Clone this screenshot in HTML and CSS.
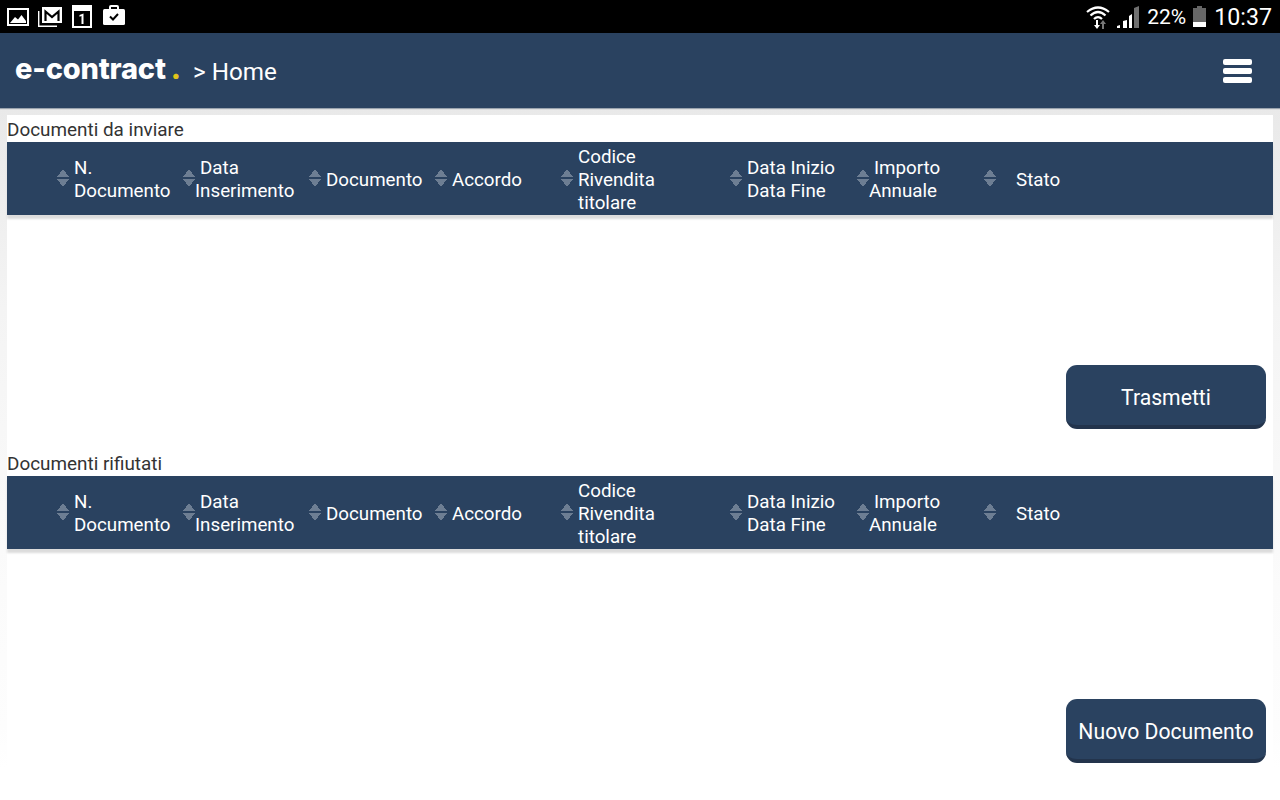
FILE: index.html
```html
<!DOCTYPE html>
<html lang="it">
<head>
<meta charset="utf-8">
<title>e-contract</title>
<link rel="stylesheet" href="styles.css">
</head>
<body>
<div class="statusbar">
  <div class="status-left">
    <svg class="ic pic" width="22" height="18" viewBox="0 0 22 18"><rect x="1" y="1" width="20" height="16" fill="none" stroke="#fff" stroke-width="2"/><path d="M3 15 L8 9 L11 11.500 L14.500 7 L19 13 V15Z" fill="#fff"/></svg>
    <svg class="ic mail" width="24" height="20" viewBox="0 0 24 20"><path d="M.7 4V19.300H19" fill="none" stroke="#fff" stroke-width="1.400"/><rect x="4" y="0" width="20" height="16" fill="#fff"/><path d="M7.500 14V4.500L14 10 20.500 4.500V14" fill="none" stroke="#000" stroke-width="2.200"/></svg>
    <svg class="ic cal" width="20" height="23" viewBox="0 0 20 23"><rect x="0" y="0" width="20" height="23" fill="#fff"/><rect x="2" y="6" width="16" height="15" fill="#000"/><path d="M7.500 10 L11.500 8.500 V19 H9.500 V11 L7.500 11.700Z" fill="#fff"/></svg>
    <svg class="ic bag" width="22" height="20" viewBox="0 0 22 20"><path d="M7 5V2Q7 1 8 1H14Q15 1 15 2V5" fill="none" stroke="#fff" stroke-width="2"/><rect x="0" y="4" width="22" height="16" rx="1.500" fill="#fff"/><path d="M7 11.500L10 14.500 15 9" fill="none" stroke="#000" stroke-width="2"/></svg>
  </div>
  <div class="status-right">
    <svg class="wifi" width="24" height="24" viewBox="0 0 24 24"><path d="M1 7Q12 -2 23 7" fill="none" stroke="#fff" stroke-width="2.200"/><path d="M4.500 10.500Q12 3.500 19.500 10.500" fill="none" stroke="#fff" stroke-width="2.200"/><path d="M8 14Q12 10 16 14" fill="none" stroke="#fff" stroke-width="2.200"/><path d="M10 15H12V20H14L11 24 8 20H10Z" fill="#fff"/><path d="M16 24V19H14L17 15 20 19H18V24Z" fill="#777"/></svg>
    <svg class="signal" width="22" height="22" viewBox="0 0 22 22"><path d="M0 22V20L3 19V22Z M6 22V15L10 14V22Z M12 22V10L15 8V22Z" fill="#fff"/><path d="M17 22V2L22 0V22Z" fill="#6f6f6f"/></svg>
    <span class="pct">22%</span>
    <svg class="batt" width="13" height="21" viewBox="0 0 13 21"><rect x="4" y="0" width="5" height="3" fill="#666"/><rect x="0" y="2" width="13" height="19" fill="#666"/><rect x="0" y="16" width="13" height="5" fill="#fff"/></svg>
    <span class="clock">10:37</span>
  </div>
</div>

<header class="appbar">
  <div class="brand">
    <span class="logo">e-contract<span class="logo-dot">.</span></span>
    <span class="crumb">&gt; Home</span>
  </div>
  <div class="burger"><i></i><i></i><i></i></div>
</header>

<main class="content">
  <section class="panel">
    <div class="panel-title">Documenti da inviare</div>
    <div class="thead">
      <div class="th"><span class="sort"></span><span class="lbl l1">N.<br>Documento</span></div>
      <div class="th"><span class="sort"></span><span class="lbl l0"><span class="ind">Data</span><br>Inserimento</span></div>
      <div class="th"><span class="sort"></span><span class="lbl l1">Documento</span></div>
      <div class="th"><span class="sort"></span><span class="lbl l1">Accordo</span></div>
      <div class="th wide"><span class="sort"></span><span class="lbl l1">Codice<br>Rivendita<br>titolare</span></div>
      <div class="th mid"><span class="sort"></span><span class="lbl l1">Data Inizio<br>Data Fine</span></div>
      <div class="th mid"><span class="sort"></span><span class="lbl l0"><span class="ind">Importo</span><br>Annuale</span></div>
      <div class="th"><span class="sort"></span><span class="lbl l2">Stato</span></div>
    </div>
    <div class="tbody"></div>
    <div class="actions"><button class="btn" type="button">Trasmetti</button></div>
  </section>

  <section class="panel">
    <div class="panel-title">Documenti rifiutati</div>
    <div class="thead">
      <div class="th"><span class="sort"></span><span class="lbl l1">N.<br>Documento</span></div>
      <div class="th"><span class="sort"></span><span class="lbl l0"><span class="ind">Data</span><br>Inserimento</span></div>
      <div class="th"><span class="sort"></span><span class="lbl l1">Documento</span></div>
      <div class="th"><span class="sort"></span><span class="lbl l1">Accordo</span></div>
      <div class="th wide"><span class="sort"></span><span class="lbl l1">Codice<br>Rivendita<br>titolare</span></div>
      <div class="th mid"><span class="sort"></span><span class="lbl l1">Data Inizio<br>Data Fine</span></div>
      <div class="th mid"><span class="sort"></span><span class="lbl l0"><span class="ind">Importo</span><br>Annuale</span></div>
      <div class="th"><span class="sort"></span><span class="lbl l2">Stato</span></div>
    </div>
    <div class="tbody"></div>
    <div class="actions"><button class="btn" type="button">Nuovo Documento</button></div>
  </section>
</main>
</body>
</html>
```
FILE: styles.css
```css
* { box-sizing: border-box; }
html, body { height: 100%; }
body {
  margin: 0;
  height: 800px;
  overflow: hidden;
  background: #fff;
  font-family: Roboto, "Liberation Sans", sans-serif;
  color: #333;
}
.statusbar {
  height: 33px;
  background: #000;
  color: #fff;
  display: flex;
  justify-content: space-between;
  align-items: center;
  padding: 0 8px 0 7px;
}
.status-left { display: flex; align-items: center; }
.status-right { display: flex; align-items: center; }
.ic { display: block; }
.mail { margin-left: 9px; }
.cal { margin-left: 10px; }
.bag { margin-left: 11px; margin-bottom: 3px; }
.wifi { margin-right: 7px; display: block; }
.signal { margin-right: 8px; display: block; }
.pct { font-size: 21px; margin-right: 7px; }
.batt { margin-right: 8px; display: block; }
.clock { font-size: 23.200px; }
.appbar {
  height: 75px;
  background: #2a4260;
  display: flex;
  justify-content: space-between;
  align-items: center;
  padding: 0 28px 0 15px;
  box-shadow: 0 1px 1px #9aa3ae;
  position: relative;
}
.brand { display: flex; align-items: center; }
.logo {
  font-family: Inter, sans-serif;
  font-weight: 800;
  font-size: 29px;
  letter-spacing: -0.200px;
  color: #fff;
  line-height: 36px;
  width: 178px;
  margin-bottom: 4px;
}
.logo-dot { color: #e2c41a; margin-left: 5px; }
.crumb { color: #fff; font-size: 24.200px; margin-top: 2px; }
.burger { display: flex; flex-direction: column; gap: 3px; margin-top: 1px; }
.burger i { display: block; width: 29px; height: 6px; border-radius: 2px; background: #fff; }
.content {
  padding: 7px 7px 0;
  background: linear-gradient(#e9e9e9, #f4f4f4 200px, #fbfbfb 480px, #fdfdfd 620px, #fff 660px);
  height: 692px;
}
.panel { background: #fff; height: 334px; }
.panel-title { height: 27px; font-size: 18.900px; line-height: 29px; color: #333; }
.thead {
  height: 73px;
  background: #2a4260;
  color: #fff;
  display: flex;
  align-items: center;
  padding: 3px 0 0 50px;
  box-shadow: 0 4px 2px #dcdcdc;
}
.th { width: 126px; display: flex; align-items: center; flex: none; }
.th.wide { width: 169px; }
.th.mid { width: 127px; }
.sort {
  width: 12px;
  height: 18px;
  flex: none;
  margin-bottom: 5px;
  background:
    linear-gradient(to bottom right, transparent 50%, #6d7e93 50%) left top / 6px 8px no-repeat,
    linear-gradient(to bottom left, transparent 50%, #6d7e93 50%) right top / 6px 8px no-repeat,
    linear-gradient(to top right, transparent 50%, #6d7e93 50%) left bottom / 6px 8px no-repeat,
    linear-gradient(to top left, transparent 50%, #6d7e93 50%) right bottom / 6px 8px no-repeat;
}
.lbl { font-size: 18.750px; line-height: 23px; white-space: nowrap; }
.l0 { margin-left: 0; }
.l1 { margin-left: 5px; }
.l2 { margin-left: 20px; }
.ind { margin-left: 5px; }
.tbody { height: 150px; }
.actions { display: flex; justify-content: flex-end; padding-right: 7px; }
.btn {
  width: 200px;
  height: 64px;
  border: 0;
  border-bottom: 4px solid #23344c;
  border-radius: 11px;
  background: #2a4260;
  color: #fff;
  font-family: Roboto, sans-serif;
  font-size: 21.200px;
  padding: 5px 0 0;
}
```
